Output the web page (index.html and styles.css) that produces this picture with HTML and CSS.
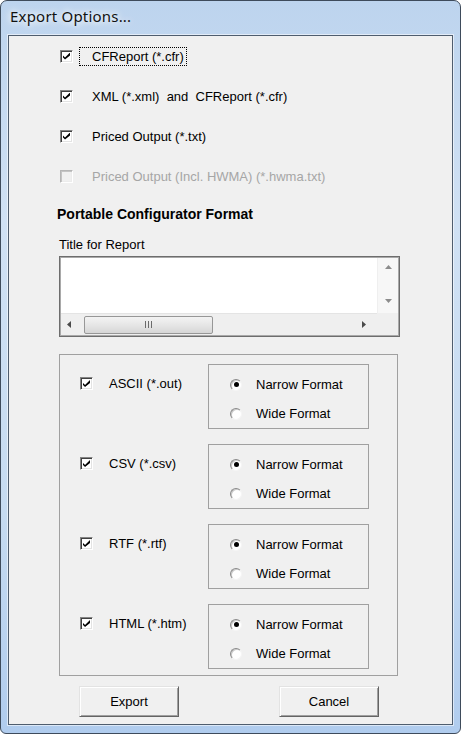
FILE: index.html
```html
<!DOCTYPE html>
<html lang="en">
<head>
    <meta charset="UTF-8">
    <title>Export Options...</title>
    <link rel="stylesheet" href="styles.css">
</head>
<body>
    <div class="window">
        <div class="titlebar">Export Options...</div>

        <div class="client">
            <!-- Export targets -->
            <ul class="outputs">
                <li class="opt">
                    <span class="check checked"></span>
                    <span class="focus-label">CFReport (*.cfr)</span>
                </li>
                <li class="opt">
                    <span class="check checked"></span>
                    <span class="label">XML (*.xml)  and  CFReport (*.cfr)</span>
                </li>
                <li class="opt">
                    <span class="check checked"></span>
                    <span class="label">Priced Output (*.txt)</span>
                </li>
                <li class="opt disabled">
                    <span class="check"></span>
                    <span class="label">Priced Output (Incl. HWMA) (*.hwma.txt)</span>
                </li>
            </ul>

            <h2 class="section-title">Portable Configurator Format</h2>
            <div class="field-label">Title for Report</div>

            <!-- Multiline text box with both scrollbars -->
            <div class="textbox">
                <div class="text-area"></div>
                <div class="vscroll">
                    <svg width="7" height="4" viewBox="0 0 7 4"><polygon points="0,4 3.5,0 7,4" fill="#8c8c8c"/></svg>
                    <svg width="7" height="4" viewBox="0 0 7 4"><polygon points="0,0 7,0 3.5,4" fill="#8c8c8c"/></svg>
                </div>
                <div class="hscroll">
                    <svg class="arrow" width="4" height="7" viewBox="0 0 4 7"><polygon points="4,0 4,7 0,3.5" fill="#4a4a4a"/></svg>
                    <div class="thumb"><span class="grip"></span></div>
                    <svg class="arrow right" width="4" height="7" viewBox="0 0 4 7"><polygon points="0,0 4,3.5 0,7" fill="#4a4a4a"/></svg>
                </div>
                <div class="corner"></div>
            </div>

            <!-- Output formats -->
            <div class="formats">
                <div class="format-row">
                    <div class="format-check">
                        <span class="check checked"></span>
                        <span class="label">ASCII (*.out)</span>
                    </div>
                    <div class="radio-box">
                        <div class="radio-item"><span class="radio selected"></span>Narrow Format</div>
                        <div class="radio-item"><span class="radio"></span>Wide Format</div>
                    </div>
                </div>
                <div class="format-row">
                    <div class="format-check">
                        <span class="check checked"></span>
                        <span class="label">CSV (*.csv)</span>
                    </div>
                    <div class="radio-box">
                        <div class="radio-item"><span class="radio selected"></span>Narrow Format</div>
                        <div class="radio-item"><span class="radio"></span>Wide Format</div>
                    </div>
                </div>
                <div class="format-row">
                    <div class="format-check">
                        <span class="check checked"></span>
                        <span class="label">RTF (*.rtf)</span>
                    </div>
                    <div class="radio-box">
                        <div class="radio-item"><span class="radio selected"></span>Narrow Format</div>
                        <div class="radio-item"><span class="radio"></span>Wide Format</div>
                    </div>
                </div>
                <div class="format-row">
                    <div class="format-check">
                        <span class="check checked"></span>
                        <span class="label">HTML (*.htm)</span>
                    </div>
                    <div class="radio-box">
                        <div class="radio-item"><span class="radio selected"></span>Narrow Format</div>
                        <div class="radio-item"><span class="radio"></span>Wide Format</div>
                    </div>
                </div>
            </div>

            <div class="buttons">
                <button class="btn">Export</button>
                <button class="btn">Cancel</button>
            </div>
        </div>
    </div>
</body>
</html>
```

FILE: styles.css
```css
/* General */
* {
    box-sizing: border-box;
}

html, body {
    margin: 0;
    padding: 0;
}

body {
    width: 461px;
    height: 734px;
    overflow: hidden;
    background: #ffffff;
    font-family: "Liberation Sans", Arial, sans-serif;
    font-size: 13px;
    color: #000;
}

/* Window frame */
.window {
    width: 461px;
    height: 734px;
    display: flex;
    flex-direction: column;
    padding: 0 7px 8px 7px;
    border: 1px solid #3e4b5b;
    border-radius: 7px 7px 6px 6px;
    background: linear-gradient(180deg, #bdd4ee 0%, #d0e1f4 30%, #c6dbf1 70%, #b0ccee 100%);
}

.titlebar {
    height: 34px;
    padding: 5px 0 0 2px;
    font-family: "Noto Sans", "Open Sans", sans-serif;
    font-size: 15px;
    letter-spacing: 0.2px;
    line-height: 20px;
    color: #111;
    text-shadow: 0 0 6px #fff, 0 0 10px #fff;
}

.client {
    flex: 1;
    background: #f0f0f0;
    border: 1px solid #4f5d6e;
    box-shadow: 0 0 0 1px rgba(255, 255, 255, 0.55);
}

/* Checkboxes */
.check {
    position: relative;
    flex: none;
    width: 13px;
    height: 13px;
    background: #fff;
    border: 1px solid;
    border-color: #848484 #fff #fff #848484;
    box-shadow: inset 1px 1px #404040, inset -1px -1px #e3e3e3;
}

.check.checked::after {
    content: "";
    position: absolute;
    left: 2px;
    top: 2px;
    width: 7px;
    height: 7px;
    background: #000;
    clip-path: polygon(0 43%, 29% 71%, 100% 0, 100% 43%, 29% 100%, 0 71%);
}

.outputs {
    list-style: none;
    margin: 0;
    padding: 0 0 0 51px;
}

.opt {
    display: flex;
    align-items: center;
    height: 40px;
}

.opt .label {
    margin-left: 19px;
    white-space: pre;
}

.focus-label {
    margin-left: 6px;
    padding: 1px 2px 1px 12px;
    border: 1px dotted #000;
    line-height: 15px;
}

.opt.disabled .label {
    color: #a6a6a6;
}

.opt.disabled .check {
    background: #f0f0f0;
    border-color: #b5b5b5 #fff #fff #b5b5b5;
    box-shadow: inset 1px 1px #c4c4c4, inset -1px -1px #ececec;
}

/* Portable Configurator section */
.section-title {
    margin: 9px 0 0 48px;
    font-size: 14px;
    font-weight: bold;
    line-height: 18px;
}

.field-label {
    margin: 14px 0 0 50px;
    line-height: 16px;
}

.textbox {
    display: grid;
    grid-template-columns: 1fr 21px;
    grid-template-rows: 1fr 22px;
    width: 341px;
    height: 81px;
    margin: 3px 0 0 50px;
    border: 1px solid #6d6d6d;
    box-shadow: inset 0 0 0 1px #a9a9a9;
    padding: 1px;
    background: #fff;
}

.text-area {
    background: #fff;
}

.vscroll {
    display: flex;
    flex-direction: column;
    justify-content: space-between;
    align-items: center;
    padding: 7px 0 10px;
    background: #f7f7f7;
    border-left: 1px solid #efefef;
}

.hscroll {
    display: flex;
    align-items: center;
    background: #efefef;
    border-top: 1px solid #e4e4e4;
}

.hscroll .arrow {
    margin-left: 6px;
}

.hscroll .arrow.right {
    margin-left: auto;
    margin-right: 11px;
}

.thumb {
    display: flex;
    justify-content: center;
    align-items: center;
    width: 129px;
    height: 18px;
    margin-left: 13px;
    border: 1px solid #979797;
    border-radius: 2px;
    background: linear-gradient(180deg, #f3f3f3, #e6e6e6 50%, #d6d6d6);
}

.grip {
    width: 7px;
    height: 7px;
    background: repeating-linear-gradient(90deg, #6b6b6b 0 1px, transparent 1px 3px);
}

.corner {
    background: #efefef;
}

/* Output formats group */
.formats {
    width: 339px;
    margin: 17px 0 0 50px;
    padding: 9px 0;
    border: 1px solid #a0a0a0;
}

.format-row {
    display: grid;
    grid-template-columns: 148px 161px;
    height: 62px;
    margin-bottom: 18px;
}

.format-row:last-child {
    margin-bottom: 0;
}

.format-check {
    display: flex;
    align-items: center;
    height: 15px;
    margin: 12px 0 0 20px;
}

.format-check .label {
    margin-left: 16px;
}

.radio-box {
    border: 1px solid #a0a0a0;
    padding: 5px 0 0 21px;
}

.radio-item {
    display: flex;
    align-items: center;
    height: 29px;
}

.radio {
    position: relative;
    flex: none;
    width: 12px;
    height: 12px;
    margin-right: 14px;
    border-radius: 50%;
    background: #fff;
    border: 1px solid;
    border-color: #8a8a8a #f4f4f4 #f4f4f4 #8a8a8a;
    box-shadow: inset 1px 1px #c9c9c9;
}

.radio.selected::after {
    content: "";
    position: absolute;
    left: 2.5px;
    top: 2.5px;
    width: 5px;
    height: 5px;
    border-radius: 50%;
    background: #000;
}

/* Buttons */
.buttons {
    display: flex;
    gap: 100px;
    margin: 10px 0 0 70px;
}

.btn {
    width: 100px;
    height: 31px;
    padding: 0;
    font-family: inherit;
    font-size: 13px;
    color: #000;
    background: #f0f0f0;
    border: 1px solid;
    border-color: #e3e3e3 #646464 #646464 #e3e3e3;
    box-shadow: inset 1px 1px #fff, inset -1px -1px #a0a0a0;
}
```
